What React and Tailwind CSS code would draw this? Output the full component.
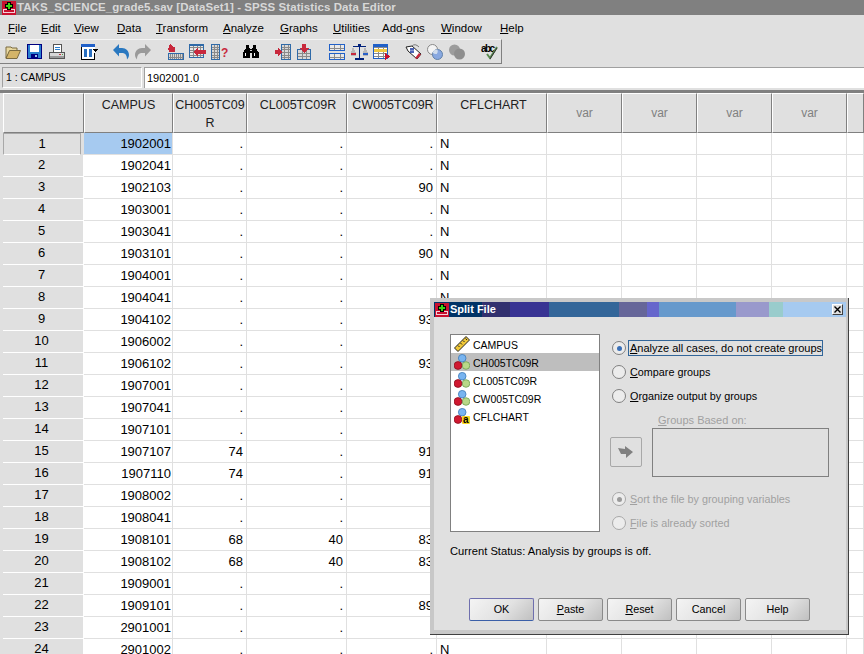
import React from "react";

const rows = [
  ["1902001", ".", ".", "."], ["1902041", ".", ".", "."], ["1902103", ".", ".", "90"], ["1903001", ".", ".", "."],
  ["1903041", ".", ".", "."], ["1903101", ".", ".", "90"], ["1904001", ".", ".", "."], ["1904041", ".", ".", "."],
  ["1904102", ".", ".", "93"], ["1906002", ".", ".", "."], ["1906102", ".", ".", "93"], ["1907001", ".", ".", "."],
  ["1907041", ".", ".", "."], ["1907101", ".", ".", "."], ["1907107", "74", ".", "91"], ["1907110", "74", ".", "91"],
  ["1908002", ".", ".", "."], ["1908041", ".", ".", "."], ["1908101", "68", "40", "83"], ["1908102", "68", "40", "83"],
  ["1909001", ".", ".", "."], ["1909101", ".", ".", "89"], ["2901001", ".", ".", "."], ["2901002", ".", ".", "."],
];

const menus = [
  ["F", "ile", "w-[33px]"], ["E", "dit", "w-[33px]"], ["V", "iew", "w-[43px]"], ["D", "ata", "w-[39px]"],
  ["T", "ransform", "w-[67px]"], ["A", "nalyze", "w-[57px]"], ["G", "raphs", "w-[53px]"], ["U", "tilities", "w-[49px]"],
  ["Add-", "ons", "w-[59px]", true], ["W", "indow", "w-[59px]"], ["H", "elp", "w-[40px]"],
];

function Ic({ children, w = 17 }) {
  return <svg width={w} height="16" viewBox={`0 0 ${w} 16`} className="block shrink-0" shapeRendering="crispEdges">{children}</svg>;
}

const AppIcon = () => (
  <svg width="14" height="14" viewBox="0 0 14 14" className="block shrink-0" shapeRendering="crispEdges">
    <rect width="14" height="14" fill="#c8102e" />
    <rect x="1" y="8" width="12" height="4" fill="#f4d0d8" />
    <rect x="2" y="9" width="10" height="2" fill="#c8102e" />
    <rect x="5" y="1" width="4" height="8" fill="#000" />
    <rect x="3" y="3" width="8" height="4" fill="#000" />
    <rect x="6" y="2" width="2" height="6" fill="#39d414" />
    <rect x="4" y="4" width="6" height="2" fill="#39d414" />
  </svg>
);

const Open = () => (
  <svg width="16" height="16" viewBox="0 0 16 16" className="block shrink-0">
    <path d="M1 14V3h5l1 1h5v3H5L1 14z" fill="#e8d8a0" stroke="#7a6a40" />
    <path d="M1 14.500l3.500-8H15.500l-3.500 8H1z" fill="#d4b468" stroke="#7a6a40" />
  </svg>
);
const Save = () => (
  <Ic w={15}>
    <rect x="0" y="0" width="15" height="15" fill="#000080" />
    <rect x="1" y="1" width="13" height="13" fill="#2a7fd0" />
    <rect x="3" y="1" width="9" height="7" fill="#fff" />
    <rect x="4" y="10" width="7" height="4" fill="#000080" />
    <rect x="8" y="11" width="2" height="2" fill="#9cc8f0" />
  </Ic>
);
const Print = () => (
  <Ic w={16}>
    <rect x="4" y="0" width="8" height="8" fill="#fff" stroke="#555" strokeWidth="1" />
    <rect x="6" y="3" width="5" height="1" fill="#2a7fd0" />
    <rect x="6" y="5" width="5" height="1" fill="#2a7fd0" />
    <rect x="0.5" y="8.5" width="15" height="6" fill="#d8d8d8" stroke="#555" />
    <rect x="1" y="12" width="14" height="2" fill="#999" />
    <rect x="10" y="10" width="2" height="1" fill="#c83040" />
    <rect x="13" y="10" width="1" height="1" fill="#40a040" />
  </Ic>
);
const VarView = () => (
  <Ic w={17}>
    <rect x="0" y="0" width="14" height="3" fill="#2060c8" />
    <rect x="0" y="3" width="14" height="13" fill="#fff" />
    <rect x="0" y="3" width="1" height="13" fill="#000" />
    <rect x="0" y="15" width="14" height="1" fill="#000" />
    <rect x="13" y="9" width="1" height="7" fill="#000" />
    <rect x="3" y="5" width="3" height="8" fill="#2a70c0" />
    <rect x="8" y="5" width="3" height="8" fill="#2a70c0" />
    <path d="M12 5h5l-2.500 3z" fill="#000" />
  </Ic>
);
const Arrow = ({ fill, flip }) => (
  <svg width="16" height="16" viewBox="0 0 16 16" className="block shrink-0">
    <path transform={flip ? "matrix(-1 0 0 1 16 0)" : undefined} d="M0 6L6 0V4H9C13 4 16 7 16 11C16 13 15 14 14 15.500C14 11 12 9 9 9H6V12.500Z" fill={fill} />
  </svg>
);
const Binoc = () => (
  <Ic w={16}>
    <rect x="3" y="1" width="3" height="5" fill="#000" />
    <rect x="10" y="1" width="3" height="5" fill="#000" />
    <rect x="6" y="5" width="4" height="4" fill="#000" />
    <path d="M3 4h4v10H0V9z M13 4H9v10h7V9z" fill="#000" />
    <rect x="2" y="9" width="1" height="3" fill="#fff" />
    <rect x="11" y="9" width="1" height="3" fill="#fff" />
    <rect x="7" y="6" width="2" height="1" fill="#ccc" />
  </Ic>
);
const Lines = ({ x, y, w, h, cols = 3, rowsN = 3, stroke = "#2f6aa8", fill = "#d8d8d8" }) => {
  const out = [];
  for (let i = 1; i < cols; i++) out.push(<rect key={`c${i}`} x={x + Math.round((i * w) / cols)} y={y} width="1" height={h} fill="#8a8a8a" />);
  for (let i = 1; i < rowsN; i++) out.push(<rect key={`r${i}`} x={x} y={y + Math.round((i * h) / rowsN)} width={w} height="1" fill="#8a8a8a" />);
  return <g><rect x={x} y={y} width={w} height={h} fill={fill} />{out}<rect x={x + 0.5} y={y + 0.5} width={w - 1} height={h - 1} fill="none" stroke={stroke} /></g>;
};
const GoTo = () => (
  <Ic>
    <path d="M3 0l3 2 -1 1h3v5H2V5L1 6z" fill="#c8283c" />
    <Lines x={1} y={9} w={16} h={7} cols={8} rowsN={2} />
  </Ic>
);
const FindRow = () => (
  <Ic w={17}>
    <Lines x={0} y={0} w={15} h={14} cols={4} rowsN={5} fill="#e8e8e8" />
    <rect x="0" y="0" width="15" height="2" fill="#2f6aa8" />
    <path d="M4 8l5-4v2h8v4H9v2z" fill="#c8283c" />
  </Ic>
);
const VarQ = () => (
  <svg width="18" height="16" viewBox="0 0 18 16" className="block shrink-0">
    <g shapeRendering="crispEdges"><Lines x={0} y={0} w={9} h={16} cols={3} rowsN={6} /></g>
    <text x="10" y="13" fontSize="12" fontWeight="700" fill="#c8283c" fontFamily="'Liberation Sans',sans-serif">?</text>
  </svg>
);
const InsVar = () => (
  <Ic>
    <Lines x={6} y={0} w={10} h={16} cols={3} rowsN={6} />
    <path d="M0 6h3V3l4 5-4 5v-3H0z" fill="#c8283c" />
  </Ic>
);
const InsCase = () => (
  <Ic w={14}>
    <Lines x={0} y={5} w={14} h={11} cols={3} rowsN={3} />
    <path d="M5 0h4v4h3l-5 5-5-5h3z" fill="#c8283c" />
  </Ic>
);
const SplitI = () => (
  <Ic>
    <Lines x={0} y={0} w={16} h={7} cols={3} rowsN={2} stroke="#2060c8" fill="#e8e8e8" />
    <Lines x={0} y={9} w={16} h={7} cols={3} rowsN={2} stroke="#2060c8" fill="#e8e8e8" />
  </Ic>
);
const Scale = () => (
  <Ic>
    <rect x="8" y="1" width="1" height="13" fill="#00207a" />
    <rect x="7" y="0" width="3" height="2" fill="#00207a" />
    <rect x="2" y="2" width="13" height="1" fill="#00207a" />
    <rect x="4" y="14" width="9" height="2" fill="#00207a" />
    <path d="M2 3l-2 6v3h5V9z" fill="#b8b8b8" />
    <rect x="0" y="9" width="5" height="2" fill="#c8283c" />
    <path d="M14 3l-2 6v3h5V9z" fill="#b8b8b8" />
    <rect x="12" y="9" width="5" height="2" fill="#2a60c8" />
  </Ic>
);
const SelectI = () => (
  <Ic>
    <Lines x={0} y={0} w={15} h={15} cols={3} rowsN={5} stroke="#2060c8" fill="#fff" />
    <rect x="1" y="5" width="13" height="3" fill="#f0c840" />
    <rect x="0" y="0" width="15" height="3" fill="#2060c8" />
    <path d="M12 9l5 3.500-5 3.500z" fill="#c8102e" />
  </Ic>
);
const Tag = () => (
  <svg width="17" height="16" viewBox="0 0 17 16" className="block shrink-0">
    <path d="M1 3l6-1 9 8-4 5-9-8z" fill="#fff" stroke="#222" />
    <path d="M10 14l4-5 2 1.500-4 4.500z" fill="#c8283c" />
    <path d="M5 5h4M5 8h4M6 4v5M8 4v5" stroke="#1030a0" strokeWidth="1" fill="none" />
    <path d="M7 2Q10-1 14 3" stroke="#777" fill="none" />
  </svg>
);
const Circles = () => (
  <svg width="16" height="16" viewBox="0 0 16 16" className="block shrink-0">
    <circle cx="5.500" cy="5.500" r="5" fill="#f4f4f4" stroke="#888" />
    <circle cx="10.500" cy="10.500" r="5" fill="#88a8e0" stroke="#6080a8" />
    <path d="M7 6.200a5 5 0 0 1 3.500-.7 5 5 0 0 1-.7 4.500 5 5 0 0 1-4-1 5 5 0 0 1 1.200-2.800z" fill="#d0dcec" />
  </svg>
);
const CirclesGray = () => (
  <svg width="16" height="16" viewBox="0 0 16 16" className="block shrink-0">
    <circle cx="5.500" cy="6" r="5.500" fill="#9c9c9c" />
    <circle cx="10.500" cy="10" r="5.500" fill="#8e8e8e" />
  </svg>
);
const Spell = () => (
  <svg width="18" height="16" viewBox="0 0 18 16" className="block shrink-0">
    <text x="0" y="8" fontSize="10" fontWeight="700" fill="#000" fontFamily="'Liberation Sans',sans-serif" textLength="14">abc</text>
    <path d="M6 10l3 4 7-11" stroke="#5a8a50" strokeWidth="2" fill="none" />
    <path d="M9 15l7-11" stroke="#333" strokeWidth="1" fill="none" />
  </svg>
);

const toolbarGroups = [
  [<Open key="a" />, <Save key="b" />, <Print key="c" />],
  [<VarView key="a" />],
  [<Arrow key="a" fill="#2a78c0" />, <Arrow key="b" fill="#9a9a9a" flip />],
  [<GoTo key="a" />, <FindRow key="b" />, <VarQ key="c" />],
  [<Binoc key="a" />],
  [<InsVar key="a" />, <InsCase key="b" />],
  [<SplitI key="a" />, <Scale key="b" />, <SelectI key="c" />],
  [<Tag key="a" />, <Circles key="b" />, <CirclesGray key="c" />],
  [<Spell key="a" />],
];

const Ruler = () => (
  <svg width="16" height="16" viewBox="0 0 16 16" className="block shrink-0">
    <path d="M0.500 12l11.500-11.500 3.500 3.500L4 15.500z" fill="#f0c838" stroke="#222" />
    <path d="M4 9.500l1.500 1.500M6.500 7l1.500 1.500M9 4.500l1.500 1.500M11.500 2.500l1.500 1.500" stroke="#222" />
  </svg>
);
const Balls = ({ nominal }) => (
  <svg width="16" height="16" viewBox="0 0 16 16" className="block shrink-0">
    <circle cx="8.200" cy="4.200" r="3.800" fill="#78b4f0" stroke="#3a78b8" strokeWidth="0.800" />
    <circle cx="12" cy="11.500" r="3.800" fill={nominal ? "none" : "#b8d888"} stroke={nominal ? "none" : "#70a050"} strokeWidth="0.800" />
    <circle cx="4" cy="11.500" r="3.900" fill="#d01830" stroke="#8a1020" strokeWidth="0.800" />
    {nominal ? (
      <g>
        <rect x="8" y="8" width="8" height="8" rx="1" fill="#f8d820" />
        <text x="9" y="15" fontSize="10" fontWeight="700" fill="#000" fontFamily="'Liberation Sans',sans-serif">a</text>
      </g>
    ) : null}
  </svg>
);

function Radio({ checked, disabled }) {
  return (
    <span className={`flex h-[14px] w-[14px] shrink-0 items-center justify-center rounded-full border bg-[#ececec] ${disabled ? "border-[#a8a8a8]" : "border-[#808080]"}`}>
      {checked ? <span className={`h-[5px] w-[5px] rounded-full ${disabled ? "bg-[#9a9a9a]" : "bg-[#3a70b8]"}`} /> : null}
    </span>
  );
}

function RadioRow({ checked, disabled, first, rest, focus }) {
  return (
    <div className="flex h-[24px] items-center gap-[2px] pl-[2px]">
      <Radio checked={checked} disabled={disabled} />
      <span className={`h-[16px] whitespace-nowrap pl-[1px] leading-[14px] ${focus ? "text-[11px]" : "text-[10.800px]"} ${disabled ? "text-[#a0a0a0]" : "text-black"} ${focus ? "border border-[#336699]" : "border border-transparent"}`}>
        <u>{first}</u>{rest}
      </span>
    </div>
  );
}

function Btn({ first, rest, primary }) {
  return (
    <button className={`flex h-[23px] w-[65px] items-center justify-center rounded-[2px] border bg-[linear-gradient(135deg,#f4f4f4_0%,#e2e2e2_55%,#c0c0c0_100%)] text-[10.800px] text-black ${primary ? "border-[#6f6fae] border-b-[#3a5fa8]" : "border-[#8a8a8a]"}`}>
      <span><u>{first}</u>{rest}</span>
    </button>
  );
}

const gridCols = "grid grid-cols-[81px_89px_74px_100px_90px_110px_75px_75px_75px_75px_17px]";
const numCell = "h-[22px] border-r border-b border-[#e0e0e0] bg-white pr-[3px] text-right text-[13px] leading-[22px] text-black";
const plainCell = "h-[22px] border-r border-b border-[#e0e0e0] bg-white";
const headCell = "h-[40px] break-all border-t border-l border-t-white border-l-white border-r border-b border-r-[#808080] border-b-[#808080] bg-[#e0e0e0] pt-[2px] text-center text-[12.500px] leading-[18px] text-[#202020]";
const varCell = "flex h-[40px] items-center justify-center border-t border-l border-t-white border-l-white border-r border-b border-r-[#808080] border-b-[#808080] bg-[#e0e0e0] text-[12px] text-[#808080]";

export default function App() {
  return (
    <div className="relative h-[654px] w-[864px] overflow-hidden bg-[#e0e0e0] font-['Liberation_Sans',Arial,sans-serif]">
      {/* title */}
      <div className="flex h-[15px] items-center gap-[1px] bg-[#808080] pl-[2px]">
        <AppIcon />
        <span className="whitespace-nowrap text-[11.500px] font-bold tracking-[0.070px] text-[#d8d8d8]">TAKS_SCIENCE_grade5.sav [DataSet1] - SPSS Statistics Data Editor</span>
      </div>
      {/* menu */}
      <div className="flex h-[24px] items-center pl-[8px] pt-[3px] text-[11.500px] text-black">
        {menus.map(([a, b, w, plain]) => (
          <span key={b} className={`${w} shrink-0`}>
            {plain ? <>{a}<u>{b[0]}</u>{b.slice(1)}</> : <><u>{a}</u>{b}</>}
          </span>
        ))}
      </div>
      {/* toolbar */}
      <div className="flex h-[25px] w-[502px] items-center gap-[16px] border-t border-r border-b border-t-[#f4f4f4] border-r-[#808080] border-b-[#808080] pl-[5px] pt-[1px]">
        {toolbarGroups.map((g, i) => (
          <div key={i} className="flex items-center gap-[6px]">
            {g.map((ic, j) => <div key={j} className="flex w-[16px] items-center justify-start">{ic}</div>)}
          </div>
        ))}
      </div>
      {/* cell bar */}
      <div className="mt-[3px] flex h-[21px] pl-[2px] text-black">
        <div className="flex w-[140px] items-center border-t border-l border-t-[#a0a0a0] border-l-[#a0a0a0] border-b border-r border-b-white border-r-white pl-[3px] text-[10.500px]">1 : CAMPUS</div>
        <div className="ml-[2px] flex flex-1 items-center border-t border-l border-t-[#a0a0a0] border-l-[#a0a0a0] bg-white pl-[2px] text-[11px]">1902001.0</div>
      </div>
      {/* grid */}
      <div className="mt-[2px] border-t-[3px] border-[#808080] pl-[3px]">
        <div className={gridCols}>
          <div className={headCell}></div>
          <div className={headCell}>CAMPUS</div>
          <div className={headCell}>CH005TC09R</div>
          <div className={`${headCell} pl-[2px]`}>CL005TC09R</div>
          <div className={`${headCell} pl-[2px]`}>CW005TC09R</div>
          <div className={`${headCell} pl-[3px]`}>CFLCHART</div>
          <div className={varCell}>var</div>
          <div className={varCell}>var</div>
          <div className={varCell}>var</div>
          <div className={varCell}>var</div>
          <div className={varCell}></div>
          {rows.map((r, i) => (
            <React.Fragment key={r[0]}>
              <div className={`h-[22px] bg-[#e0e0e0] text-center text-[13px] leading-[20px] text-black border-b border-b-white ${i === 0 ? "border border-[#a8a8a8] mr-[3px]" : "border-r border-r-white pr-[3px]"}`}>{i + 1}</div>
              <div className={`${numCell} !pr-[1px] ${i === 0 ? "!bg-[#a6caf0]" : ""}`}>{r[0]}</div>
              <div className={numCell}>{r[1]}</div>
              <div className={numCell}>{r[2]}</div>
              <div className={numCell}>{r[3]}</div>
              <div className="h-[22px] border-r border-b border-[#e0e0e0] bg-white pl-[3px] text-[13px] leading-[22px] text-black">N</div>
              <div className={plainCell}></div>
              <div className={plainCell}></div>
              <div className={plainCell}></div>
              <div className={plainCell}></div>
              <div className={plainCell}></div>
            </React.Fragment>
          ))}
        </div>
      </div>
      {/* dialog */}
      <div className="absolute left-[430px] top-[298px] h-[337px] w-[419px] border-r border-b border-[#404040] bg-[#c8c8c8] pt-[4px] pr-[2px] pb-[3px] pl-[4px]">
        <div className="flex h-[15px] items-center justify-between bg-[linear-gradient(90deg,#003366_48px,#31306e_48px,#31306e_76px,#383393_76px,#383393_115px,#336699_115px,#336699_185px,#666699_185px,#666699_213px,#6666cc_213px,#6666cc_225px,#6699cc_225px,#6699cc_302px,#9999cc_302px,#9999cc_335px,#99cccc_335px,#99cccc_349px,#a6caf0_349px)] pl-[1px] pr-[3px]">
          <div className="flex items-center gap-[1px]">
            <AppIcon />
            <span className="text-[11px] font-bold text-white">Split File</span>
          </div>
          <div className="flex h-[11px] w-[11px] items-center justify-center border-t border-l border-r border-b border-t-white border-l-white border-r-[#404040] border-b-[#404040] bg-[#e0e0e0]">
            <svg width="7" height="7" viewBox="0 0 7 7" className="block"><path d="M0.500 0.500l6 6M6.500 0.500l-6 6" stroke="#000" strokeWidth="1.400" /></svg>
          </div>
        </div>
        <div className="h-[313px] bg-[#e0e0e0] pl-[16px] pt-[17px] text-black">
          <div className="flex h-[198px] items-start">
            <div className="h-[198px] w-[150px] shrink-0 border border-[#808080] bg-white text-[10.500px]">
              <div className="flex h-[18px] items-center gap-[3px] pl-[3px]"><Ruler /><span className="pt-[3px]">CAMPUS</span></div>
              <div className="flex h-[18px] items-center gap-[3px] bg-[#bebebe] pl-[3px]"><Balls /><span className="pt-[3px]">CH005TC09R</span></div>
              <div className="flex h-[18px] items-center gap-[3px] pl-[3px]"><Balls /><span className="pt-[3px]">CL005TC09R</span></div>
              <div className="flex h-[18px] items-center gap-[3px] pl-[3px]"><Balls /><span className="pt-[3px]">CW005TC09R</span></div>
              <div className="flex h-[18px] items-center gap-[3px] pl-[3px]"><Balls nominal /><span className="pt-[3px]">CFLCHART</span></div>
            </div>
            <div className="ml-[10px] flex w-[222px] flex-col pt-[2px]">
              <RadioRow checked first="A" rest="nalyze all cases, do not create groups" focus />
              <RadioRow first="C" rest="ompare groups" />
              <RadioRow first="O" rest="rganize output by groups" />
              <div className="mt-[4px] flex">
                <div className="mt-[25px] flex h-[30px] w-[32px] shrink-0 items-center justify-center rounded-[2px] border border-[#a8a8a8] bg-[#e0e0e0]">
                  <svg width="16" height="12" viewBox="0 0 16 12" className="block"><path d="M0 2L7 3V0L15 6L8 12V8H3Z" fill="#808080" /></svg>
                </div>
                <div className="ml-[10px]">
                  <div className="h-[16px] pl-[6px] pt-[1px] text-[11px] leading-[14px] text-[#a0a0a0]"><u>G</u>roups Based on:</div>
                  <div className="h-[49px] w-[177px] border border-[#808080]"></div>
                </div>
              </div>
              <div className="mt-[10px]">
                <RadioRow checked disabled first="S" rest="ort the file by grouping variables" />
                <RadioRow disabled first="F" rest="ile is already sorted" />
              </div>
            </div>
          </div>
          <div className="mt-[12px] h-[14px] text-[11.200px] leading-[14px]">Current Status: Analysis by groups is off.</div>
          <div className="ml-[19px] mt-[40px] flex gap-[4px]">
            <Btn first="" rest="OK" primary />
            <Btn first="P" rest="aste" />
            <Btn first="R" rest="eset" />
            <Btn first="" rest="Cancel" />
            <Btn first="" rest="Help" />
          </div>
        </div>
      </div>
    </div>
  );
}
